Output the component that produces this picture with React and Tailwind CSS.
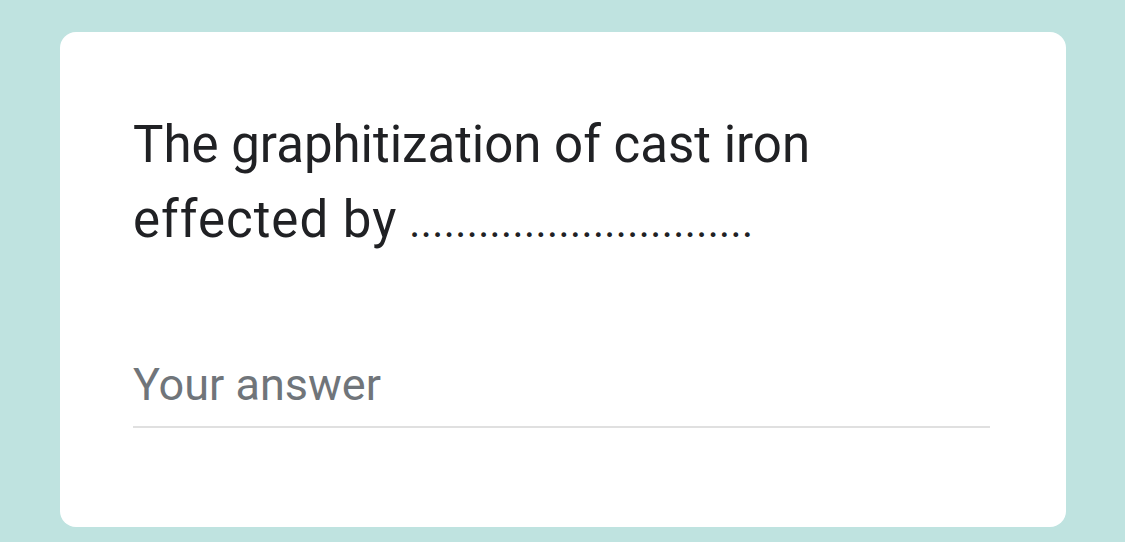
import React from 'react';

const App = () => {
  return (
    <div className="w-[1125px] h-[542px] bg-[#bfe3e0] pt-[32px] pl-[60px] overflow-hidden">
      <div className="w-[1006px] h-[495px] bg-white rounded-[16px] pt-[75px] pl-[73px] pr-[76px]">
        <p
          className="text-[51px] leading-[75px] text-[#202124]"
          style={{ fontFamily: 'Roboto, "Noto Sans", sans-serif' }}
        >
          The graphitization of cast iron
          <br />
          <span className="tracking-[1px]">effected by</span>
          <span className="ml-[12px] text-[42px] leading-[40px] tracking-[0.4px]">..............................</span>
        </p>
        <div className="mt-[102px] border-b-2 border-[#e0e0e0] pb-[15px]">
          <span
            className="block text-[45px] leading-[52px] text-[#70757a]"
            style={{ fontFamily: 'Roboto, "Noto Sans", sans-serif' }}
          >
            Your answer
          </span>
        </div>
      </div>
    </div>
  );
};

export default App;
